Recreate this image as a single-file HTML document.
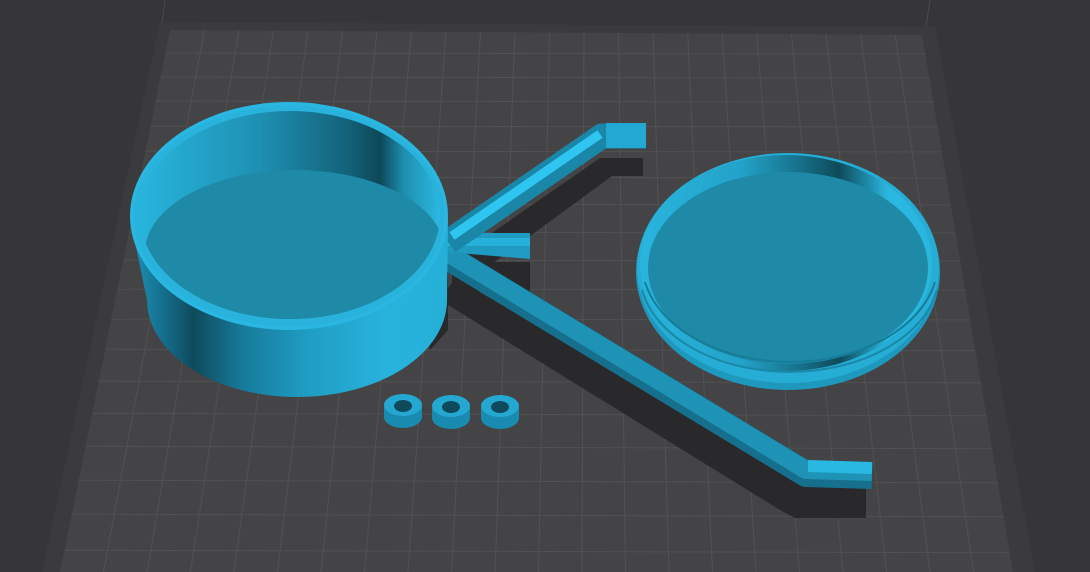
<!DOCTYPE html>
<html><head><meta charset="utf-8"><style>html,body{margin:0;padding:0;background:#363638;overflow:hidden}svg{display:block}</style></head>
<body>
<svg width="1090" height="572" viewBox="0 0 1090 572" xmlns="http://www.w3.org/2000/svg">
<defs>
<clipPath id="bed"><polygon points="170,30 922,35 1013,572 60,572"/></clipPath>
<linearGradient id="body" x1="0" x2="1" y1="0" y2="0">
<stop offset="0" stop-color="#1f94b6"/><stop offset="0.1" stop-color="#157090"/><stop offset="0.2" stop-color="#0e4a5c"/><stop offset="0.35" stop-color="#17799a"/><stop offset="0.55" stop-color="#1f9cc2"/><stop offset="0.8" stop-color="#27b3dc"/><stop offset="1" stop-color="#26b0d8"/>
</linearGradient>
<linearGradient id="wall" x1="0" x2="1" y1="0" y2="0">
<stop offset="0" stop-color="#28b4dc"/><stop offset="0.4" stop-color="#1e90b2"/><stop offset="0.7" stop-color="#136078"/><stop offset="0.8" stop-color="#0e4858"/><stop offset="0.88" stop-color="#1e8fb0"/><stop offset="1" stop-color="#2ab8e0"/>
</linearGradient>
<linearGradient id="lidwall" x1="0" x2="1" y1="0" y2="0">
<stop offset="0" stop-color="#29b5de"/><stop offset="0.35" stop-color="#23a2c8"/><stop offset="0.55" stop-color="#17708a"/><stop offset="0.68" stop-color="#0e4a5a"/><stop offset="0.85" stop-color="#2bb8e0"/><stop offset="1" stop-color="#2ab6de"/>
</linearGradient>
</defs>
<rect width="1090" height="572" fill="#363638"/>
<line x1="165" y1="0" x2="162" y2="24" stroke="#4a4a4c" stroke-width="1"/>
<line x1="930" y1="0" x2="926" y2="27" stroke="#4a4a4c" stroke-width="1"/>
<polygon points="160,22 935,27 1035,572 42,572" fill="#3b3b3d"/>
<polygon points="170,30 922,35 1013,572 60,572" fill="#444446"/>
<g clip-path="url(#bed)" stroke="#515154" stroke-width="1">
<line x1="204.5" y1="30" x2="103.5" y2="572"/><line x1="239" y1="30" x2="147" y2="572"/><line x1="273.5" y1="30" x2="190.5" y2="572"/><line x1="308" y1="30" x2="234" y2="572"/><line x1="342.5" y1="30" x2="277.5" y2="572"/><line x1="377" y1="30" x2="321" y2="572"/><line x1="411.5" y1="30" x2="364.5" y2="572"/><line x1="446" y1="30" x2="408" y2="572"/><line x1="480.5" y1="30" x2="451.5" y2="572"/><line x1="515" y1="30" x2="495" y2="572"/><line x1="549.5" y1="30" x2="538.5" y2="572"/><line x1="584" y1="30" x2="582" y2="572"/><line x1="618.5" y1="30" x2="625.5" y2="572"/><line x1="653" y1="30" x2="669" y2="572"/><line x1="687.5" y1="30" x2="712.5" y2="572"/><line x1="722" y1="30" x2="756" y2="572"/><line x1="756.5" y1="30" x2="799.5" y2="572"/><line x1="791" y1="30" x2="843" y2="572"/><line x1="825.5" y1="30" x2="886.5" y2="572"/><line x1="860" y1="30" x2="930" y2="572"/><line x1="894.5" y1="30" x2="973.5" y2="572"/>
<line x1="0" y1="53" x2="1090" y2="54"/><line x1="0" y1="77" x2="1090" y2="78"/><line x1="0" y1="101" x2="1090" y2="102"/><line x1="0" y1="126" x2="1090" y2="127"/><line x1="0" y1="151" x2="1090" y2="152"/><line x1="0" y1="177" x2="1090" y2="178"/><line x1="0" y1="204" x2="1090" y2="205"/><line x1="0" y1="232" x2="1090" y2="233"/><line x1="0" y1="260" x2="1090" y2="261"/><line x1="0" y1="289" x2="1090" y2="290"/><line x1="0" y1="319" x2="1090" y2="320"/><line x1="0" y1="349" x2="1090" y2="351"/><line x1="0" y1="381" x2="1090" y2="383"/><line x1="0" y1="413" x2="1090" y2="416"/><line x1="0" y1="446" x2="1090" y2="449"/><line x1="0" y1="480" x2="1090" y2="483"/><line x1="0" y1="514" x2="1090" y2="517"/><line x1="0" y1="550" x2="1090" y2="553"/>
</g>
<g fill="#29292b">
<polygon points="440,300 455,278 805,478 866,480 866,518 795,518 780,510"/>
<polygon points="450,262 600,158 643,158 643,176 612,176 470,280"/>
<rect x="452" y="262" width="78" height="30"/>
<polygon points="420,300 448,270 448,330 430,350"/>
</g>
<!-- long tube -->
<path d="M446,256 L806,474 L872,476" fill="none" stroke="#166f8c" stroke-width="26" stroke-linejoin="round"/>
<path d="M446,252 L806,470 L872,472" fill="none" stroke="#1f93b6" stroke-width="18" stroke-linejoin="round"/>
<path d="M808,466 L872,468" fill="none" stroke="#28b8e2" stroke-width="12"/>
<!-- stub -->
<path d="M446,233 L530,233 L530,259 L446,252 Z" fill="#1f9bc2"/>
<rect x="446" y="238" width="84" height="8" fill="#27b0da"/>
<!-- upper tube -->
<path d="M448,242 L602,136 L646,136" fill="none" stroke="#1a86a8" stroke-width="25" stroke-linejoin="round"/>
<path d="M452,236 L600,134" fill="none" stroke="#2ec6f0" stroke-width="9"/>
<rect x="606" y="123" width="40" height="25" fill="#22a8d2"/>
<!-- cup -->
<path d="M130,218 L147,300 A150,97 0 0 0 447,300 L448,218 Z" fill="url(#body)"/>
<ellipse cx="289" cy="216" rx="159" ry="114" fill="#28b2dc"/>
<ellipse cx="290" cy="215" rx="150" ry="104" fill="url(#wall)"/>
<clipPath id="cupin"><ellipse cx="290" cy="215" rx="150" ry="104"/></clipPath>
<ellipse cx="295" cy="252" rx="150" ry="82" fill="#1e8aa8" clip-path="url(#cupin)"/>
<ellipse cx="289" cy="216" rx="157" ry="112" fill="none" stroke="#2ab8e2" stroke-width="3"/>
<!-- lid -->
<ellipse cx="788" cy="272" rx="152" ry="118" fill="#1f98be"/>
<ellipse cx="788" cy="268" rx="151" ry="115" fill="#26add6"/>
<ellipse cx="786" cy="263" rx="146" ry="108" fill="url(#lidwall)"/>
<ellipse cx="788" cy="268" rx="140" ry="96" fill="#1e8aa8"/>
<path d="M645,282 A148,100 0 0 0 935,282" fill="none" stroke="#167c98" stroke-width="2"/>
<path d="M642,290 A150,100 0 0 0 937,290" fill="none" stroke="#1a88a8" stroke-width="2"/>
<!-- rings -->
<g>
<path d="M384,407 L384,417 A19,11 0 0 0 422,417 L422,407 Z" fill="#1a8bb0"/>
<ellipse cx="403" cy="405" rx="19" ry="11" fill="#24a8d2"/>
<ellipse cx="403" cy="406" rx="9" ry="6" fill="#0f4a5c"/>
<path d="M432,408 L432,418 A19,11 0 0 0 470,418 L470,408 Z" fill="#1a8bb0"/>
<ellipse cx="451" cy="406" rx="19" ry="11" fill="#24a8d2"/>
<ellipse cx="451" cy="407" rx="9" ry="6" fill="#0f4a5c"/>
<path d="M481,408 L481,418 A19,11 0 0 0 519,418 L519,408 Z" fill="#1a8bb0"/>
<ellipse cx="500" cy="406" rx="19" ry="11" fill="#24a8d2"/>
<ellipse cx="500" cy="407" rx="9" ry="6" fill="#0f4a5c"/>
</g>
</svg>
</body></html>
